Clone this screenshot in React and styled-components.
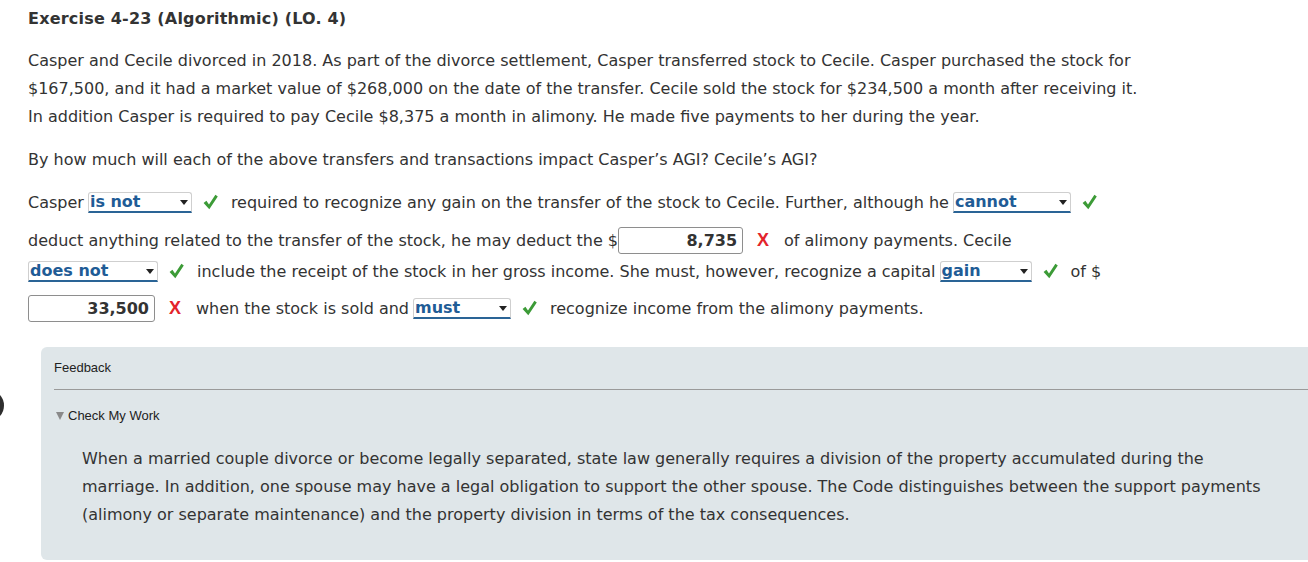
import styled, { createGlobalStyle } from "styled-components";

const GlobalStyle = createGlobalStyle`
  html, body {
    margin: 0;
    padding: 0;
    background: #fff;
    overflow: hidden;
  }
  body {
    font-family: "DejaVu Sans", Verdana, sans-serif;
    color: #333;
  }
`;

const Page = styled.div`
  position: relative;
  padding: 9px 0 0 28px;
  width: 1308px;
  box-sizing: border-box;
`;

const Title = styled.h1`
  margin: 0;
  font-size: 16px;
  letter-spacing: 0.2px;
  line-height: 20px;
  font-weight: bold;
  color: #333;
`;

const Para = styled.p`
  margin: ${(p) => p.$top || 0}px 0 0;
  font-size: 16px;
  line-height: 28px;
`;

const Answers = styled.div`
  margin-top: 10px;
  font-size: 16px;
`;

const Row = styled.div`
  display: flex;
  align-items: center;
  height: ${(p) => p.$h}px;
  white-space: pre;
`;

const Select = styled.span`
  position: relative;
  display: inline-block;
  box-sizing: border-box;
  width: ${(p) => p.$w}px;
  height: 21px;
  margin-left: ${(p) => p.$ml ?? 4}px;
  padding: 0 0 0 1px;
  border: 1px solid #cfcfcf;
  border-bottom: 2px solid #2a6496;
  border-radius: 3px 3px 0 0;
  background: #fff;
  color: #1f5c96;
  font-weight: bold;
  line-height: 18px;
  &::after {
    content: "";
    position: absolute;
    right: 3px;
    top: 7px;
    border-left: 4px solid transparent;
    border-right: 4px solid transparent;
    border-top: 5px solid #222;
  }
`;

const Box = styled.span`
  display: inline-block;
  box-sizing: border-box;
  width: ${(p) => p.$w}px;
  height: 27px;
  padding-right: 5px;
  border: 1px solid #8e8e8e;
  border-radius: 3px;
  background: #fff;
  color: #333;
  font-weight: bold;
  text-align: right;
  line-height: 25px;
  font-size: 16px;
`;

const Mark = styled.span`
  display: inline-flex;
  align-items: center;
  margin: 0 ${(p) => p.$mr ?? 13}px 0 ${(p) => p.$ml ?? 11}px;
`;

const Cross = styled.span`
  margin: 0 ${(p) => p.$mr ?? 15}px 0 ${(p) => p.$ml ?? 14}px;
  font-family: "Liberation Sans", Arial, sans-serif;
  font-weight: bold;
  font-size: 18px;
  color: #e3242b;
`;

const Panel = styled.div`
  margin: 13px 0 0 13px;
  height: 213px;
  padding-left: 13px;
  background: #dfe6e9;
  border-radius: 6px 0 0 6px;
`;

const PanelHead = styled.div`
  height: 42px;
  border-bottom: 1px solid #9a9a9a;
  font-family: "Liberation Sans", Arial, sans-serif;
  font-size: 13px;
  line-height: 41px;
  color: #222;
`;

const Toggle = styled.div`
  display: flex;
  align-items: center;
  margin-top: 18px;
  padding-left: 2px;
  font-family: "Liberation Sans", Arial, sans-serif;
  font-size: 13px;
  color: #222;
  &::before {
    content: "";
    margin-right: 4px;
    border-left: 4px solid transparent;
    border-right: 4px solid transparent;
    border-top: 8px solid #8a8a8a;
  }
`;

const Explain = styled.p`
  margin: 22px 0 0 28px;
  font-size: 16px;
  line-height: 28px;
  color: #333;
`;

const Blob = styled.div`
  position: absolute;
  left: -26px;
  top: 390px;
  width: 30px;
  height: 31px;
  border-radius: 50%;
  background: #2e2e2e;
`;

function Check() {
  return (
    <Mark>
      <svg width="15" height="16" viewBox="0 0 15 16">
        <path
          d="M0.6 9 L3.4 6.8 L6 10.4 L12.4 0.8 L14.8 2.4 L6.3 15.2 Z"
          fill="#3c9b37"
        />
      </svg>
    </Mark>
  );
}

export default function App() {
  return (
    <Page>
      <GlobalStyle />
      <Blob />
      <Title>Exercise 4-23 (Algorithmic) (LO. 4)</Title>
      <Para $top={18}>
        Casper and Cecile divorced in 2018. As part of the divorce settlement,
        Casper transferred stock to Cecile. Casper purchased the stock for
        <br />
        $167,500, and it had a market value of $268,000 on the date of the
        transfer. Cecile sold the stock for $234,500 a month after receiving
        it.
        <br />
        In addition Casper is required to pay Cecile $8,375 a month in
        alimony. He made five payments to her during the year.
      </Para>
      <Para $top={15}>
        By how much will each of the above transfers and transactions impact
        Casper’s AGI? Cecile’s AGI?
      </Para>
      <Answers>
        <Row $h={36}>
          <span>Casper</span>
          <Select $w={104}>is not</Select>
          <Check />
          <span>
            required to recognize any gain on the transfer of the stock to
            Cecile. Further, although he
          </span>
          <Select $w={118}>cannot</Select>
          <Check />
        </Row>
        <Row $h={40}>
          <span>deduct anything related to the transfer of the stock, he may deduct the $</span>
          <Box $w={125}>8,735</Box>
          <Cross>X</Cross>
          <span>of alimony payments. Cecile</span>
        </Row>
        <Row $h={22}>
          <Select $w={130} $ml={0}>does not</Select>
          <Check />
          <span>
            include the receipt of the stock in her gross income. She must,
            however, recognize a capital
          </span>
          <Select $w={92}>gain</Select>
          <Check />
          <span>of $</span>
        </Row>
        <Row $h={52}>
          <Box $w={127}>33,500</Box>
          <Cross>X</Cross>
          <span>when the stock is sold and</span>
          <Select $w={98}>must</Select>
          <Check />
          <span>recognize income from the alimony payments.</span>
        </Row>
      </Answers>
      <Panel>
        <PanelHead>Feedback</PanelHead>
        <Toggle>Check My Work</Toggle>
        <Explain>
          When a married couple divorce or become legally separated, state law
          generally requires a division of the property accumulated during the
          <br />
          marriage. In addition, one spouse may have a legal obligation to
          support the other spouse. The Code distinguishes between the support
          payments
          <br />
          (alimony or separate maintenance) and the property division in terms
          of the tax consequences.
        </Explain>
      </Panel>
    </Page>
  );
}
